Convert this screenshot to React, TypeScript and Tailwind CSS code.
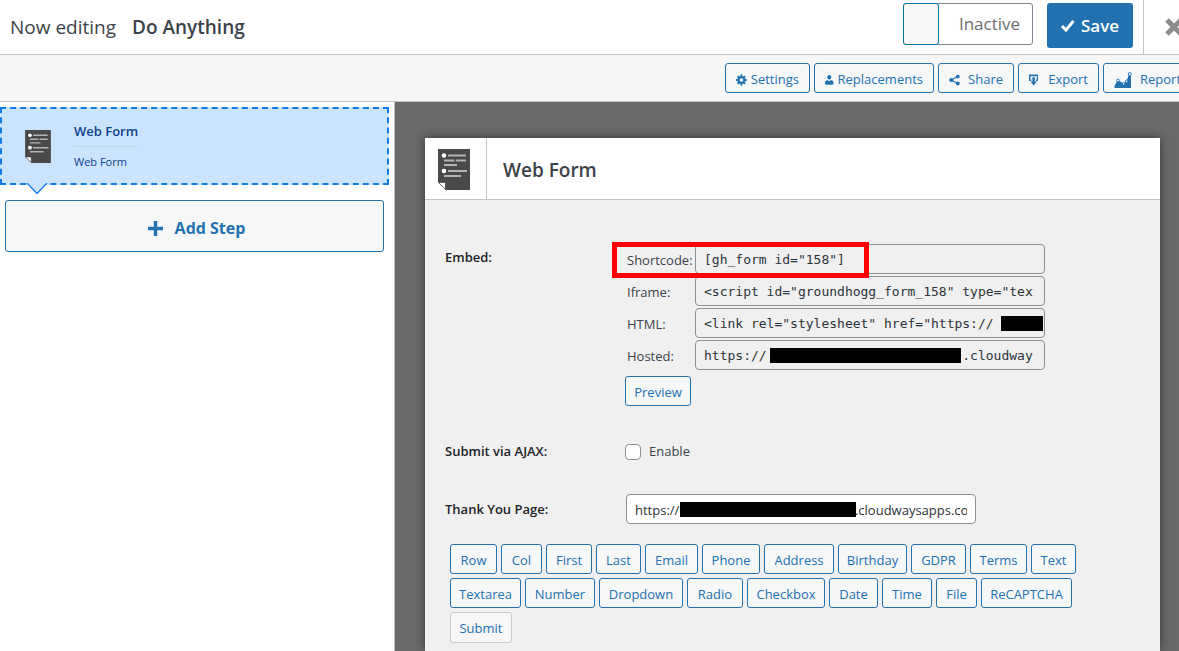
import React from "react";

const FONT = "font-['Open_Sans','Noto_Sans',sans-serif]";

function FormIcon({ className }: { className: string }) {
  return (
    <svg viewBox="0 0 32 41" className={className} aria-hidden="true">
      <path d="M0 0H32V41H8L0 33Z" fill="#494949" />
      <path d="M0.500 33.500H7.500V40.500Z" fill="#fff" stroke="#494949" strokeWidth="0.800" />
      <circle cx="6" cy="6.500" r="2.300" fill="#fff" />
      <circle cx="6" cy="22" r="2.300" fill="#fff" />
      <path d="M10 6.500H28M6 11.500H16.500M18 11.500H28M6 16H19M10 22H29M6 27H23" stroke="#b4b4b4" strokeWidth="1.800" />
    </svg>
  );
}

function GearIcon() {
  return (
    <svg viewBox="0 0 12 12" className="size-3" aria-hidden="true">
      <circle cx="6" cy="6" r="3.200" fill="none" stroke="#2271b1" strokeWidth="2.400" />
      <path d="M6 0V2M6 10V12M0 6H2M10 6H12M1.800 1.800L3 3M9 9L10.200 10.200M10.200 1.800L9 3M3 9L1.800 10.200" stroke="#2271b1" strokeWidth="2.200" />
    </svg>
  );
}

function UserIcon() {
  return (
    <svg viewBox="0 0 10 12" className="h-3 w-2.5" fill="#2271b1" aria-hidden="true">
      <ellipse cx="5" cy="2.800" rx="2.300" ry="2.700" />
      <path d="M0 11V9Q0 6.600 2.600 6L5 7.600L7.400 6Q10 6.600 10 9V11Q5 12.400 0 11Z" />
    </svg>
  );
}

function ShareIcon() {
  return (
    <svg viewBox="0 0 12 12" className="size-3" fill="#2271b1" aria-hidden="true">
      <path d="M9.500 2.300L2.500 6L9.500 9.700" fill="none" stroke="#2271b1" strokeWidth="1.300" />
      <circle cx="2.500" cy="6" r="2.300" />
      <circle cx="9.500" cy="2.300" r="2.100" />
      <circle cx="9.500" cy="9.700" r="2.100" />
    </svg>
  );
}

function ExportIcon() {
  return (
    <svg viewBox="0 0 10 12" className="h-3 w-2.5" fill="#2271b1" aria-hidden="true">
      <path d="M0 0H10V7H7.500V5.500H8.500V2H1.500V5.500H2.500V7H0Z" />
      <path d="M3.700 3H6.300V7.500H8.300L5 12L1.700 7.500H3.700Z" />
    </svg>
  );
}

function ReportIcon() {
  return (
    <svg viewBox="0 0 18 16" className="h-4 w-[18px]" aria-hidden="true">
      <path d="M0.500 16V14.500L4 9L9.500 12L13 9.500L14.500 4H17V16Z" fill="#2271b1" />
      <path d="M1 14.500L4 9L9.500 12L13 9.500L16 2" fill="none" stroke="#2271b1" strokeWidth="1.300" />
      <g fill="#f6f7f7" stroke="#2271b1" strokeWidth="0.900">
        <circle cx="4" cy="8.500" r="1.400" />
        <circle cx="9.500" cy="11.800" r="1.200" />
        <circle cx="12.600" cy="9.300" r="1.200" />
        <circle cx="15.800" cy="2" r="1.500" />
      </g>
    </svg>
  );
}

const BTN =
  "flex h-[30px] shrink-0 items-center rounded-[3px] border border-[#2271b1] bg-[#f6f7f7] px-2.5 pt-1 text-[13px] whitespace-nowrap text-[#2271b1]";

const tools = [
  { label: "Settings", icon: <GearIcon />, gap: "gap-1", width: "w-[85px]" },
  { label: "Replacements", icon: <UserIcon />, gap: "gap-1", width: "w-[120px]" },
  { label: "Share", icon: <ShareIcon />, gap: "gap-2", width: "w-[76px]" },
  { label: "Export", icon: <ExportIcon />, gap: "gap-2.5", width: "w-[81px]" },
  { label: "Reporting", icon: <ReportIcon />, gap: "gap-2", width: "w-[110px] -mr-[34px]" },
];

const fieldRows = [
  [
    ["Row", "w-[47px]"], ["Col", "w-[41px]"], ["First", "w-[46px]"], ["Last", "w-[45px]"],
    ["Email", "w-[53px]"], ["Phone", "w-[58px]"], ["Address", "w-[70px]"], ["Birthday", "w-[69px]"],
    ["GDPR", "w-[55px]"], ["Terms", "w-[57px]"], ["Text", "w-[45px]"],
  ],
  [
    ["Textarea", "w-[71px]"], ["Number", "w-[70px]"], ["Dropdown", "w-[84px]"], ["Radio", "w-[56px]"],
    ["Checkbox", "w-[78px]"], ["Date", "w-[49px]"], ["Time", "w-[50px]"], ["File", "w-[41px]"],
    ["ReCAPTCHA", "w-[91px]"],
  ],
];

const embeds = [
  { id: "shortcode", label: "Shortcode:", value: '[gh_form id="158"]', mask: "" },
  { id: "iframe", label: "Iframe:", value: '<script id="groundhogg_form_158" type="text/javascript">', mask: "" },
  { id: "html", label: "HTML:", value: '<link rel="stylesheet" href="https://', mask: "left-[306px] w-[42px]" },
  { id: "hosted", label: "Hosted:", value: "https://                         .cloudwaysapps.com", mask: "left-[75px] w-[191px]" },
];

export default function App() {
  return (
    <div className={`flex h-screen min-h-[400px] flex-col overflow-hidden bg-white text-[13px] text-[#3c434a] ${FONT}`}>
      <header className="flex h-[55px] shrink-0 items-center border-b border-[#c3c4c7] pl-2.5">
        <h1 className="flex flex-1 gap-4 text-[19px] whitespace-nowrap">
          <span>Now editing</span>
          <span className="font-semibold">Do Anything</span>
        </h1>
        <button type="button" role="switch" aria-checked="false" className="mb-1.5 flex h-[42px] w-[130px] rounded-[3px] border border-[#7e8993]">
          <span className="-my-px -ml-px h-[42px] w-9 shrink-0 rounded-[3px] border border-[#0071a1] bg-[#f7f7f7]" />
          <span className="flex h-full flex-1 items-center justify-center pl-2 text-[17px] text-[#6d6d6d]">Inactive</span>
        </button>
        <button type="button" className="mb-1 ml-3.5 flex h-[45px] w-[86px] items-center justify-center gap-1.5 rounded-[3px] bg-[#2271b1] pt-0.5 text-[17px] font-semibold text-white">
          <svg viewBox="0 0 14 12" className="h-3 w-3.5" aria-hidden="true">
            <path d="M1 6L5 10L12.500 1" fill="none" stroke="#fff" strokeWidth="3" />
          </svg>
          Save
        </button>
        <button type="button" aria-label="Close" className="ml-2.5 flex h-full w-9 items-center justify-end overflow-hidden border-l border-[#c3c4c7]">
          <svg viewBox="0 0 18 18" className="-mr-1 size-[18px] shrink-0" aria-hidden="true">
            <path d="M2 2L16 16M16 2L2 16" stroke="#8c8c8c" strokeWidth="5" />
          </svg>
        </button>
      </header>

      <nav className="flex h-[47px] shrink-0 items-center justify-end gap-1 overflow-hidden border-b border-[#c3c4c7] bg-[#f6f6f6]">
        {tools.map((t) => (
          <button key={t.label} type="button" className={`${BTN} ${t.gap} ${t.width}`}>
            {t.icon}
            {t.label}
          </button>
        ))}
      </nav>

      <div className="flex min-h-0 flex-1">
        <aside className="w-[395px] shrink-0 border-r border-[#c3c4c7] pt-[5px] pr-[5px]">
          <section className="relative flex h-[78px] items-center border-2 border-dashed border-[#127be6] bg-[#cbe4fe] pl-[23px] text-[#0b428b]">
            <FormIcon className="h-[33px] w-[26px]" />
            <div className="ml-[23px]">
              <h2 className="border-b border-[#b5d6fc] pb-1.5 text-[13px] leading-[18px] font-semibold">Web Form</h2>
              <p className="pt-1.5 text-[11px] leading-[18px]">Web Form</p>
            </div>
            <svg viewBox="0 0 22 12" className="absolute top-[74px] left-6 h-3 w-[22px]" aria-hidden="true">
              <path d="M1 0L11 10.500L21 0" fill="#cbe4fe" stroke="#127be6" strokeWidth="1.300" />
            </svg>
          </section>
          <button type="button" className="mt-[15px] ml-[5px] flex h-[52px] w-[379px] items-center justify-center gap-3 rounded-[3px] border border-[#2271b1] bg-[#f6f7f7] pt-1 pl-1 text-base font-bold text-[#2271b1]">
            <svg viewBox="0 0 15 15" className="size-[15px]" aria-hidden="true">
              <path d="M7.500 0V15M0 7.500H15" stroke="#2271b1" strokeWidth="3.400" />
            </svg>
            Add Step
          </button>
        </aside>

        <main className="flex min-w-0 flex-1 bg-[#6a6a6a] pt-9 pr-[19px] pl-[30px]">
          <article className="min-w-0 flex-1 bg-[#f0f0f0] shadow-[0_0_10px_rgba(0,0,0,0.5)]">
            <header className="flex h-[62px] border-b border-[#c3c4c7] bg-white">
              <div className="flex w-[62px] items-center justify-center border-r border-[#c3c4c7] pt-0.5 pr-1">
                <FormIcon className="h-[41px] w-8" />
              </div>
              <h2 className="flex items-center pt-1 pl-4 text-[19px] font-semibold">Web Form</h2>
            </header>

            <div className="px-5">
              <div className="flex pt-11">
                <div className="w-[180px] shrink-0 pt-1 font-semibold text-[#1d2327]">Embed:</div>
                <div>
                  <div className="relative flex flex-col gap-0.5">
                    {embeds.map((e) => (
                      <div key={e.id} className="flex items-center">
                        <label htmlFor={e.id} className="w-[70px] pt-1 pl-0.5">{e.label}</label>
                        <div className="relative">
                          <input
                            id={e.id}
                            readOnly
                            defaultValue={e.value}
                            className="block h-[30px] w-[350px] rounded border border-[#8c8f94] bg-[#f0f0f0] pr-2.5 pl-2 font-['DejaVu_Sans_Mono','Liberation_Mono',monospace] text-[13px] text-[#2c3338]"
                          />
                          {e.mask && <span className={`absolute top-2 h-[15px] bg-black ${e.mask}`} />}
                        </div>
                      </div>
                    ))}
                    <span className="pointer-events-none absolute -top-0.5 -left-[13px] h-9 w-[257px] border-[5px] border-[#fe0000]" />
                  </div>
                  <button type="button" className={`${BTN} mt-1.5 w-[66px] justify-center`}>Preview</button>
                </div>
              </div>

              <div className="flex items-center pt-9">
                <div className="w-[180px] font-semibold text-[#1d2327]">Submit via AJAX:</div>
                <label className="flex items-center gap-2">
                  <input type="checkbox" className="size-4 appearance-none rounded border border-[#8c8f94] bg-white" />
                  <span>Enable</span>
                </label>
              </div>

              <div className="flex items-center pt-8">
                <label htmlFor="thanks" className="w-[181px] pt-0.5 font-semibold text-[#1d2327]">Thank You Page:</label>
                <div className="relative">
                  <input id="thanks" defaultValue="https://                                                    .cloudwaysapps.com" className="block h-[30px] w-[350px] rounded border border-[#8c8f94] bg-white px-2 pt-0.5 text-[13px] text-[#2c3338]" />
                  <span className="absolute top-2 left-[54px] h-[15px] w-[176px] bg-black" />
                </div>
              </div>

              <div className="flex flex-col gap-1 pt-5 pl-[5px]">
                {fieldRows.map((row, i) => (
                  <div key={i} className="flex gap-1">
                    {row.map(([label, width]) => (
                      <button key={label} type="button" className={`${BTN} ${width} justify-center`}>{label}</button>
                    ))}
                  </div>
                ))}
                <button type="button" className="h-[31px] w-[62px] rounded-[3px] border border-[#c9c9c9] bg-[#f7f7f7] pt-1 text-[13px] text-[#2271b1]">Submit</button>
              </div>
            </div>
          </article>
        </main>
      </div>
    </div>
  );
}
